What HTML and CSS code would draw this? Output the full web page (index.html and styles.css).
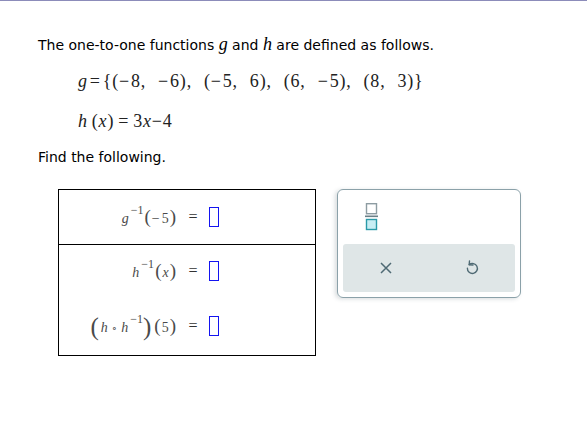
FILE: index.html
```html
<!DOCTYPE html>
<html>
<head>
<meta charset="utf-8">
<link rel="stylesheet" href="styles.css">
</head>
<body>
<div class="topline"></div>
<div class="content">
  <p class="intro">The one-to-one functions <span class="mi">g</span> and <span class="mi">h</span> are defined as follows.</p>
  <div class="def def-g"><span class="mi">g</span><span class="eq">=</span>{(<span class="neg">−</span>8<span class="c">,</span><span class="neg">−</span>6)<span class="c">,</span>(<span class="neg">−</span>5<span class="c">,</span>6)<span class="c">,</span>(6<span class="c">,</span><span class="neg">−</span>5)<span class="c">,</span>(8<span class="c">,</span>3)}</div>
  <div class="def def-h"><span class="mi">h</span><span class="fsp">(</span><span class="mi">x</span>)<span class="eq eq-h">=</span>3<span class="mi">x</span><span class="minus">−</span>4</div>
  <p class="find">Find the following.</p>
  <div class="work">
    <div class="qtable">
      <div class="qrow r1">
        <div class="line">
          <div class="lhs"><span class="mi">g</span><sup>−1</sup><span class="par">(</span><span class="neg">−</span>5<span class="par">)</span></div>
          <div class="equals">=</div>
          <div class="box"></div>
        </div>
      </div>
      <div class="qrow r2">
        <div class="line">
          <div class="lhs"><span class="mi">h</span><sup>−1</sup><span class="par">(</span><span class="mi">x</span><span class="par">)</span></div>
          <div class="equals">=</div>
          <div class="box"></div>
        </div>
        <div class="line">
          <div class="lhs"><span class="bigpar">(</span><span class="mi">h</span><span class="compose">∘</span><span class="mi">h</span><sup>−1</sup><span class="bigpar">)</span><span class="par">(</span>5<span class="par">)</span></div>
          <div class="equals">=</div>
          <div class="box"></div>
        </div>
      </div>
    </div>
    <div class="keypad">
      <div class="keys">
        <svg class="frac" width="13" height="28" viewBox="0 0 13 28">
          <rect x="1.5" y="0.7" width="10" height="10" fill="#fff" stroke="#8d9ca2" stroke-width="1.4"/>
          <rect x="0" y="12.5" width="13" height="1.6" fill="#6a7f87"/>
          <rect x="1.5" y="16.5" width="10" height="10" fill="#c8eef4" stroke="#2a9aa8" stroke-width="1.4"/>
        </svg>
      </div>
      <div class="actions">
        <svg class="icon" width="14" height="14" viewBox="0 0 14 14">
          <path d="M2 2 L12 12 M12 2 L2 12" stroke="#4f6a74" stroke-width="1.5" fill="none"/>
        </svg>
        <svg class="icon" width="14" height="16" viewBox="0 0 14 16">
          <path d="M4.2 4.6 A5 5 0 1 1 2.4 8.2" stroke="#4f6a74" stroke-width="1.4" fill="none" stroke-linecap="round"/>
          <path d="M4.5 1 L4.2 4.8 L8 5" stroke="#4f6a74" stroke-width="1.4" fill="none" stroke-linecap="round" stroke-linejoin="round"/>
        </svg>
      </div>
    </div>
  </div>
</div>
</body>
</html>
```
FILE: styles.css
```css
body {
  margin: 0;
  background: #fff;
  font-family: "DejaVu Sans", Verdana, sans-serif;
  font-size: 14px;
  color: #000;
}
.topline {
  height: 1px;
  background: #8c8cba;
}
.content {
  padding: 34px 0 0 38px;
}
.intro {
  margin: 0;
  line-height: 18px;
}
.mi {
  font-family: "Liberation Serif", "DejaVu Serif", serif;
  font-style: italic;
}
.intro .mi {
  font-size: 18px;
}
.def {
  font-family: "Liberation Serif", "DejaVu Serif", serif;
  font-size: 18px;
  letter-spacing: 0.8px;
  color: #222;
  margin-left: 40px;
  line-height: 22px;
  white-space: nowrap;
}
.def-g {
  margin-top: 16px;
}
.def-h {
  margin-top: 18px;
}
.def .eq {
  margin: 0 2px;
}
.def .eq-h {
  margin: 0 4px;
}
.def .c {
  margin-right: 12px;
}
.def .neg {
  margin-right: 1px;
}
.fsp {
  margin-left: 4px;
}
.find {
  margin: 16px 0 0 0;
  line-height: 18px;
}
.work {
  display: flex;
  align-items: flex-start;
  margin-top: 23px;
  gap: 21px;
}
.qtable {
  margin-left: 20px;
  width: 256px;
  border: 1.5px solid #000;
}
.qrow {
  display: flex;
  flex-direction: column;
}
.r1 {
  height: 54px;
  justify-content: center;
  border-bottom: 1.5px solid #000;
}
.r2 {
  height: 110px;
  padding-top: 16px;
  gap: 35px;
  box-sizing: border-box;
}
.line {
  display: flex;
  align-items: center;
  font-family: "Liberation Serif", "DejaVu Serif", serif;
  font-size: 14px;
  color: #4a4a4a;
  height: 20px;
}
.lhs {
  width: 118px;
  text-align: right;
  white-space: nowrap;
}
.lhs sup {
  font-size: 12px;
  vertical-align: 9px;
  line-height: 0;
  margin-left: 2px;
}
.lhs .neg {
  margin-right: 2px;
}
.par {
  font-size: 19px;
  margin: 0 1px;
}
.bigpar {
  font-size: 25px;
  margin: 0 2px 0 0;
  vertical-align: -3px;
  line-height: 0;
}
.compose {
  font-size: 11px;
  margin: 0 4px;
}
.equals {
  width: 32px;
  text-align: center;
  font-size: 16px;
  color: #333;
}
.box {
  width: 8px;
  height: 18px;
  border: 1px solid #1414f0;
}
.keypad {
  width: 172px;
  height: 102px;
  border: 1px solid #8ba1a9;
  border-radius: 6px;
  box-shadow: -2px 1px 4px rgba(60, 80, 90, 0.2);
  display: flex;
  flex-direction: column;
  padding: 0 5px 5px 5px;
  box-sizing: content-box;
  flex-shrink: 0;
}
.keys {
  height: 54px;
  padding-left: 22px;
  display: flex;
  align-items: center;
}
.frac {
  display: block;
}
.actions {
  flex: 1;
  background: #dfe6e7;
  border-radius: 3px;
  display: flex;
  justify-content: space-around;
  align-items: center;
}
.icon {
  display: block;
}
```
